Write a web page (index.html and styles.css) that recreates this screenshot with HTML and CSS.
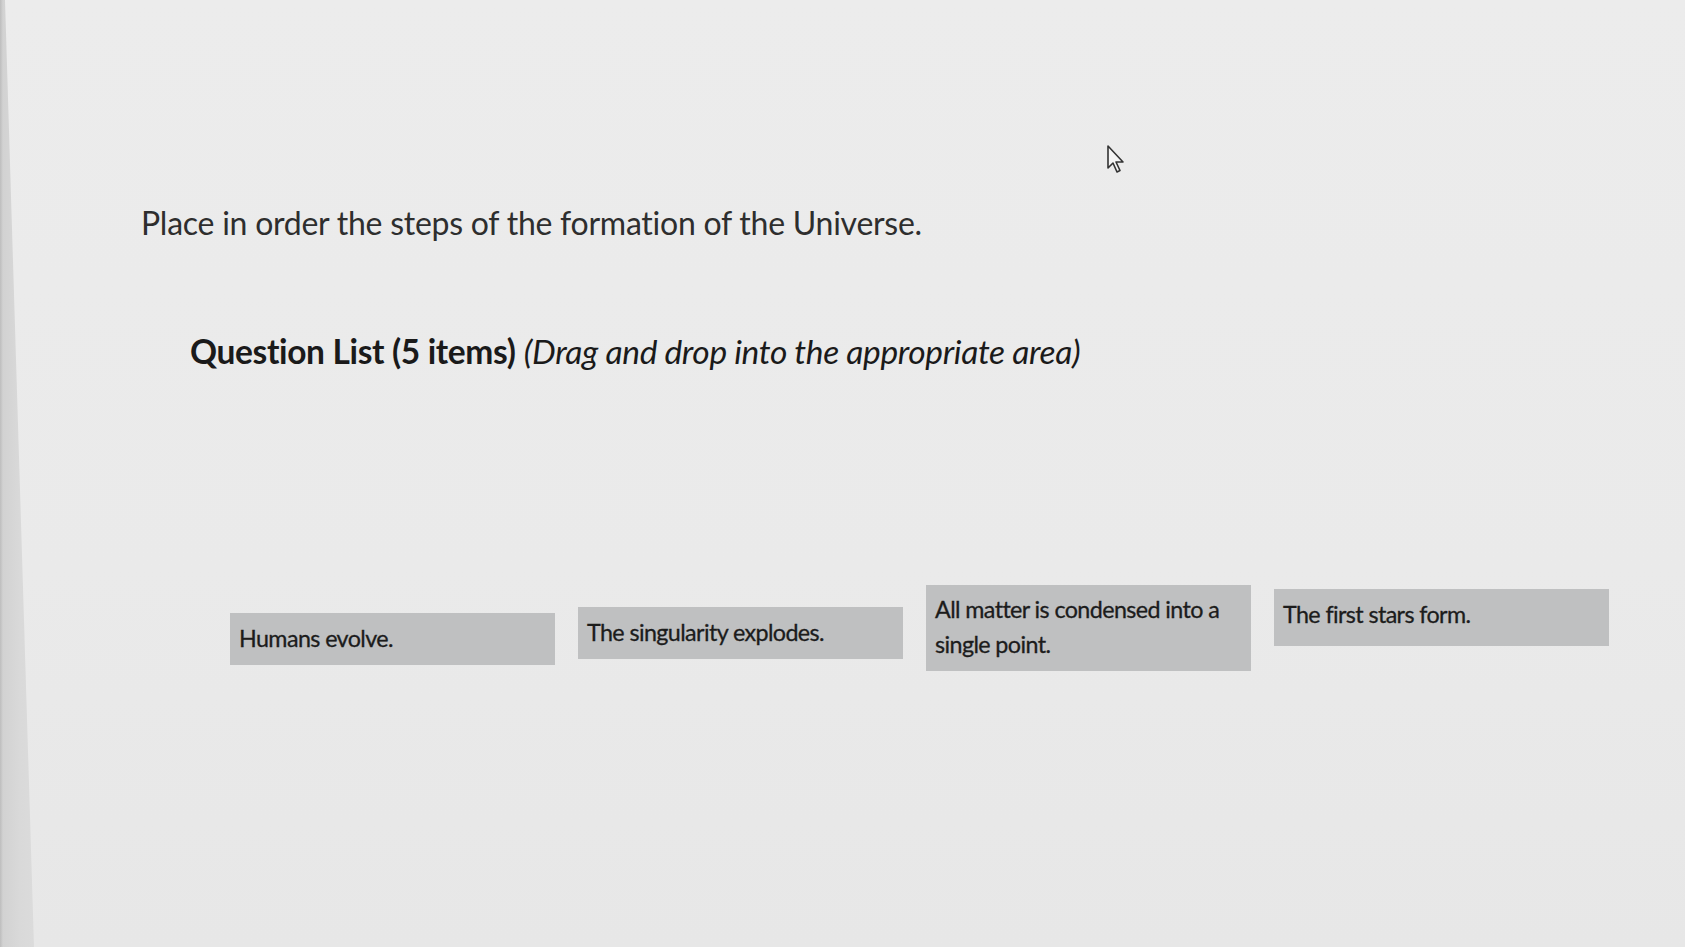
FILE: index.html
```html
<!DOCTYPE html>
<html>
<head>
<meta charset="utf-8">
<link rel="stylesheet" href="styles.css">
</head>
<body>
<div class="screen">
  <div class="content">
    <h1 class="prompt">Place in order the steps of the formation of the Universe.</h1>
    <h2 class="list-title"><span class="strong">Question List (5 items)</span> <em class="hint">(Drag and drop into the appropriate area)</em></h2>
    <div class="cards">
      <div class="card c1">Humans evolve.</div>
      <div class="card c2">The singularity explodes.</div>
      <div class="card c3">All matter is condensed into a single point.</div>
      <div class="card c4">The first stars form.</div>
    </div>
  </div>
  <svg class="cursor" width="20" height="30" viewBox="0 0 20 30">
    <path d="M2 2 L2 24 L7 19 L11 28 L14 26.5 L10 18 L17 18 Z" fill="#f4f4f4" stroke="#333" stroke-width="1.6" stroke-linejoin="round"/>
  </svg>
</div>
</body>
</html>
```
FILE: styles.css
```css
html, body {
  margin: 0;
  padding: 0;
}
body {
  width: 1685px;
  height: 947px;
  overflow: hidden;
  font-family: Lato, "Open Sans", sans-serif;
  color: #262626;
}
.screen {
  position: relative;
  width: 1685px;
  height: 947px;
  background: linear-gradient(180deg, #ececec 0%, #eaeaea 60%, #e7e7e7 100%);
  overflow: hidden;
}
.screen::before {
  content: "";
  position: absolute;
  left: 0;
  top: 0;
  width: 40px;
  height: 947px;
  background: linear-gradient(90deg, #bdbdbd 0px, #d2d2d2 3px, #d9d9d9 20px, #dcdcdc 40px);
  clip-path: polygon(0 0, 5px 0, 34px 947px, 0 947px);
}
.content {
  position: relative;
  padding: 202px 0 0 141px;
}
.prompt {
  margin: 0;
  font-size: 32px;
  font-weight: 400;
  line-height: 42px;
  letter-spacing: -0.25px;
  color: #2e2e2e;
}
.list-title {
  margin: 86px 0 0 49px;
  font-size: 33.5px;
  line-height: 42px;
  font-weight: 400;
  letter-spacing: -0.35px;
  color: #1a1a1a;
}
.list-title .strong {
  font-weight: 700;
}
.hint {
  font-style: italic;
  font-weight: 400;
}
.cards {
  display: flex;
  align-items: center;
  gap: 23px;
  margin: 213px 0 0 89px;
}
.card {
  box-sizing: border-box;
  width: 325px;
  background: #bfc0c1;
  padding: 8px 9px 9px 9px;
  font-size: 23.3px;
  line-height: 35px;
  letter-spacing: -0.6px;
  color: #1c1c1c;
  font-weight: 400;
  -webkit-text-stroke: 0.3px #1c1c1c;
}
.c1 { margin-top: 22px; }
.c2 { margin-top: 10px; }
.c3 { padding-top: 7px; padding-bottom: 9px; }
.c4 { width: 335px; padding-top: 8px; padding-bottom: 14px; margin-top: -22px; }
.cursor {
  position: absolute;
  left: 1106px;
  top: 144px;
}
```
